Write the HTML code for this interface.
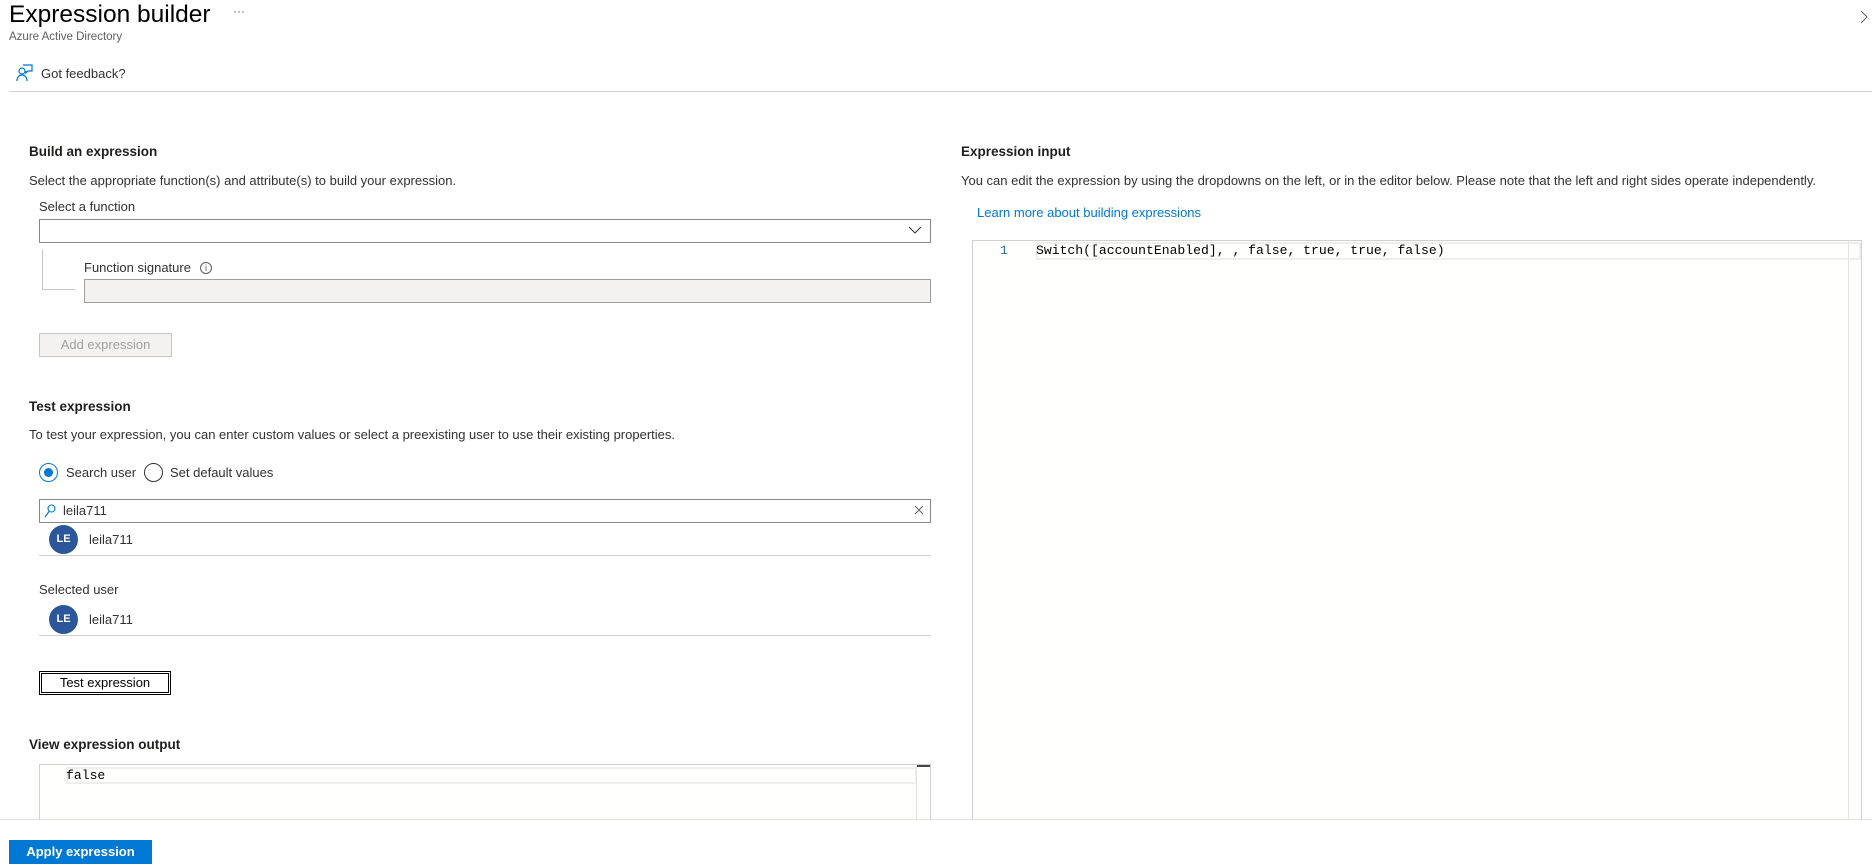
<!DOCTYPE html>
<html><head><meta charset="utf-8"><style>
*{box-sizing:border-box;margin:0;padding:0}
body{width:1872px;height:868px;background:#fff;font-family:"Liberation Sans",sans-serif;color:#323130;position:relative;overflow:hidden;font-size:13px}
.a{position:absolute;white-space:nowrap}
.h{font-weight:bold;font-size:13.5px;color:#201f1e}
.mono{font-family:"Liberation Mono",monospace;font-size:13.1px;color:#000}
.box{position:absolute;border:1px solid #8a8886;background:#fff}
.av{position:absolute;width:29px;height:29px;border-radius:50%;background:#2b579a;color:#fff;font-size:11px;font-weight:bold;text-align:center;line-height:29px}
.ln{position:absolute;height:1px;background:#d2d0ce}
</style></head><body>
<div class="a" style="left:9px;top:1px;font-size:24.5px;color:#000">Expression builder</div>
<div class="a" style="left:233px;top:4px;font-size:12px;color:#605e5c">···</div>
<div class="a" style="left:9px;top:31px;font-size:11.5px;color:#605e5c">Azure Active Directory</div>
<svg class="a" style="left:1860px;top:10px" width="10" height="14" viewBox="0 0 10 14"><path d="M1 1l6 6-6 6" fill="none" stroke="#605e5c" stroke-width="1"/></svg>
<svg class="a" style="left:16px;top:64px" width="18" height="18" viewBox="0 0 18 18"><circle cx="6" cy="7" r="3" fill="none" stroke="#0078d4" stroke-width="1.2"/><path d="M1 17c0-4 2-6 5-6s5 2 5 6" fill="none" stroke="#0078d4" stroke-width="1.2"/><path d="M7 1h9v6h-4l-2 2V7" fill="none" stroke="#0078d4" stroke-width="1.2"/></svg>
<div class="a" style="left:41px;top:66px;font-size:13px">Got feedback?</div>
<div class="ln" style="left:9px;top:91px;width:1863px"></div>

<div class="a h" style="left:29px;top:144px">Build an expression</div>
<div class="a" style="left:29px;top:173px">Select the appropriate function(s) and attribute(s) to build your expression.</div>
<div class="a" style="left:39px;top:199px">Select a function</div>
<div class="box" style="left:39px;top:219px;width:892px;height:24px"></div>
<svg class="a" style="left:908px;top:225px" width="14" height="10" viewBox="0 0 14 10"><path d="M1 2l6 6 6-6" fill="none" stroke="#323130" stroke-width="1"/></svg>
<div class="a" style="left:42px;top:249px;width:1px;height:40px;background:#c8c6c4"></div>
<div class="a" style="left:42px;top:289px;width:33px;height:1px;background:#c8c6c4"></div>
<div class="a" style="left:84px;top:260px">Function signature</div>
<div class="a" style="left:200px;top:262px;width:12px;height:12px;border:1px solid #605e5c;border-radius:50%;font-size:9px;text-align:center;line-height:10px;color:#605e5c">i</div>
<div class="box" style="left:84px;top:279px;width:847px;height:24px;background:#f3f2f1;border-color:#a19f9d"></div>
<div class="box" style="left:39px;top:333px;width:133px;height:24px;background:#f3f2f1;border-color:#c8c6c4;color:#a19f9d;text-align:center;line-height:22px">Add expression</div>

<div class="a h" style="left:29px;top:399px">Test expression</div>
<div class="a" style="left:29px;top:427px">To test your expression, you can enter custom values or select a preexisting user to use their existing properties.</div>
<div class="a" style="left:39px;top:463px;width:19px;height:19px;border:1px solid #0078d4;border-radius:50%"></div>
<div class="a" style="left:44px;top:468px;width:9px;height:9px;background:#0078d4;border-radius:50%"></div>
<div class="a" style="left:66px;top:465px">Search user</div>
<div class="a" style="left:144px;top:463px;width:19px;height:19px;border:1px solid #323130;border-radius:50%"></div>
<div class="a" style="left:170px;top:465px">Set default values</div>
<div class="box" style="left:39px;top:499px;width:892px;height:24px"></div>
<svg class="a" style="left:44px;top:504px" width="12" height="14" viewBox="0 0 12 14"><circle cx="7.5" cy="4.5" r="3.5" fill="none" stroke="#0078d4" stroke-width="1.1"/><path d="M5 7.5L1 13" stroke="#0078d4" stroke-width="1.2"/></svg>
<div class="a" style="left:63px;top:503px">leila711</div>
<svg class="a" style="left:914px;top:505px" width="10" height="10" viewBox="0 0 10 10"><path d="M1 1l8 8M9 1l-8 8" stroke="#605e5c" stroke-width="1"/></svg>
<div class="av" style="left:49px;top:525px">LE</div>
<div class="a" style="left:89px;top:532px">leila711</div>
<div class="ln" style="left:39px;top:555px;width:892px"></div>
<div class="a" style="left:39px;top:582px">Selected user</div>
<div class="av" style="left:49px;top:605px">LE</div>
<div class="a" style="left:89px;top:612px">leila711</div>
<div class="ln" style="left:39px;top:635px;width:892px"></div>
<div class="a" style="left:39px;top:671px;width:132px;height:24px;border:1px solid #000;outline:1px solid #000;outline-offset:-3px;text-align:center;line-height:22px;color:#000">Test expression</div>

<div class="a h" style="left:29px;top:737px">View expression output</div>
<div class="a" style="left:39px;top:764px;width:892px;height:55px;border:1px solid #d2d0ce;border-bottom:none;background:#fffffe"></div>
<div class="a" style="left:66px;top:767px;width:851px;height:17px;border:2px solid #eeeeee"></div>
<div class="a mono" style="left:66px;top:768px">false</div>
<div class="a" style="left:916px;top:765px;width:1px;height:54px;background:#e5e5e5"></div>
<div class="a" style="left:917px;top:765px;width:13px;height:2px;background:#444"></div>

<div class="a h" style="left:961px;top:144px">Expression input</div>
<div class="a" style="left:961px;top:173px">You can edit the expression by using the dropdowns on the left, or in the editor below. Please note that the left and right sides operate independently.</div>
<div class="a" style="left:977px;top:205px;color:#0078d4">Learn more about building expressions</div>
<div class="a" style="left:972px;top:240px;width:890px;height:579px;border:1px solid #d2d0ce;border-bottom:none;background:#fffffe"></div>
<div class="a" style="left:1036px;top:242px;width:825px;height:18px;border:2px solid #eeeeee"></div>
<div class="a mono" style="left:1000px;top:243px;color:#237893">1</div>
<div class="a mono" style="left:1036px;top:243px">Switch([accountEnabled], , false, true, true, false)</div>
<div class="a" style="left:1848px;top:241px;width:1px;height:578px;background:#e5e5e5"></div>

<div class="ln" style="left:0;top:819px;width:1872px;background:#e1dfdd"></div>
<div class="a" style="left:9px;top:840px;width:143px;height:24px;background:#0078d4;color:#fff;font-weight:bold;text-align:center;line-height:24px;font-size:13px">Apply expression</div>
</body></html>
